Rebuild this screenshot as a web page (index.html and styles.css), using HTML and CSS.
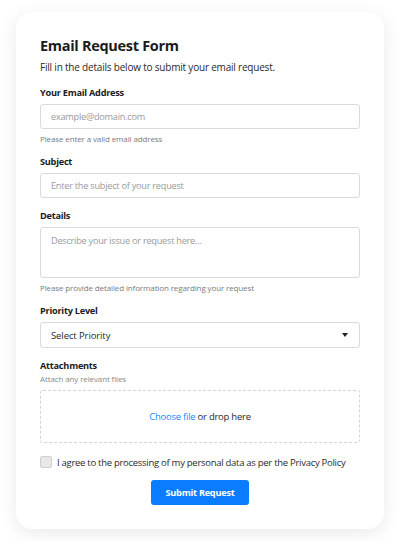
FILE: index.html
```html
<!DOCTYPE html>
<html lang="en">
<head>
<meta charset="utf-8">
<title>Email Request Form</title>
<link rel="stylesheet" href="styles.css">
</head>
<body>
<div class="card">
  <h1 class="title">Email Request Form</h1>
  <p class="subtitle">Fill in the details below to submit your email request.</p>
  <form class="form">
    <div class="field">
      <label class="label">Your Email Address</label>
      <div class="input"><span class="placeholder">example@domain.com</span></div>
      <div class="hint">Please enter a valid email address</div>
    </div>
    <div class="field">
      <label class="label">Subject</label>
      <div class="input"><span class="placeholder">Enter the subject of your request</span></div>
    </div>
    <div class="field">
      <label class="label">Details</label>
      <div class="input textarea"><span class="placeholder">Describe your issue or request here...</span></div>
      <div class="hint">Please provide detailed information regarding your request</div>
    </div>
    <div class="field">
      <label class="label">Priority Level</label>
      <div class="input select"><span class="value">Select Priority</span><span class="caret"></span></div>
    </div>
    <div class="field">
      <label class="label">Attachments</label>
      <div class="hint hint-top">Attach any relevant files</div>
      <div class="drop"><span class="link">Choose file</span>&nbsp;or drop here</div>
    </div>
    <div class="check-row">
      <span class="checkbox"></span>
      <span class="check-text">I agree to the processing of my personal data as per the Privacy Policy</span>
    </div>
    <div class="actions">
      <button type="button" class="btn">Submit Request</button>
    </div>
  </form>
</div>
</body>
</html>
```

FILE: styles.css
```css
* { box-sizing: border-box; }
html, body { margin: 0; background: #ffffff; }
body {
  padding: 12px 16px;
  font-family: "Open Sans", "Noto Sans", sans-serif;
  color: #222;
}
.card {
  background: #fff;
  border-radius: 16px;
  box-shadow: 0 4px 18px rgba(0, 0, 0, 0.09);
  padding: 24px 24px 24px 24px;
}
.title {
  margin: 0;
  font-size: 14.5px;
  line-height: 20px;
  font-weight: 700;
  letter-spacing: -0.3px;
  color: #1b1b1b;
}
.subtitle {
  margin: 3px 0 0;
  font-size: 10px;
  line-height: 16px;
  letter-spacing: -0.2px;
  color: #2a2a2a;
}
.form { margin-top: 11px; }
.field { margin-bottom: 11px; }
.label {
  display: block;
  font-size: 9.2px;
  line-height: 14px;
  font-weight: 700;
  letter-spacing: -0.25px;
  color: #1b1b1b;
}
.input {
  margin-top: 4px;
  height: 25px;
  border: 1px solid #dadada;
  border-radius: 3px;
  padding: 0 10px;
  display: flex;
  align-items: center;
  font-size: 9.2px;
  letter-spacing: -0.25px;
}
.placeholder { color: #9a9a9a; }
.textarea {
  height: 51px;
  align-items: flex-start;
  padding-top: 6px;
}
.select {
  height: 26px;
  justify-content: space-between;
  padding-right: 11px;
  font-size: 9.5px;
  letter-spacing: -0.1px;
}
.value { color: #2a2a2a; }
.caret {
  width: 0;
  height: 0;
  border-left: 3.5px solid transparent;
  border-right: 3.5px solid transparent;
  border-top: 4px solid #222;
}
.hint {
  margin-top: 5px;
  font-size: 8px;
  line-height: 10px;
  letter-spacing: -0.12px;
  color: #7a7a7a;
}
.hint-top { margin-top: 1px; color: #8a8a8a; }
.drop {
  margin-top: 6px;
  height: 53px;
  border: 1px dashed #d4d4d4;
  border-radius: 3px;
  display: flex;
  align-items: center;
  justify-content: center;
  font-size: 9.5px;
  letter-spacing: -0.25px;
  color: #2a2a2a;
}
.link { color: #1a88ff; }
.check-row {
  margin-top: 12px;
  height: 14px;
  display: flex;
  align-items: center;
  gap: 5px;
}
.checkbox {
  flex: none;
  width: 12px;
  height: 12px;
  border: 1px solid #d0d0d0;
  background: #e8e8e8;
  border-radius: 2px;
}
.check-text {
  font-size: 9.5px;
  letter-spacing: -0.28px;
  white-space: nowrap;
  color: #2a2a2a;
}
.actions {
  margin-top: 11px;
  display: flex;
  justify-content: center;
}
.btn {
  width: 98px;
  height: 25px;
  border: none;
  border-radius: 3px;
  background: #0a7cff;
  color: #fff;
  font-family: inherit;
  font-size: 9.2px;
  font-weight: 700;
  letter-spacing: -0.25px;
  padding: 0;
}
```
